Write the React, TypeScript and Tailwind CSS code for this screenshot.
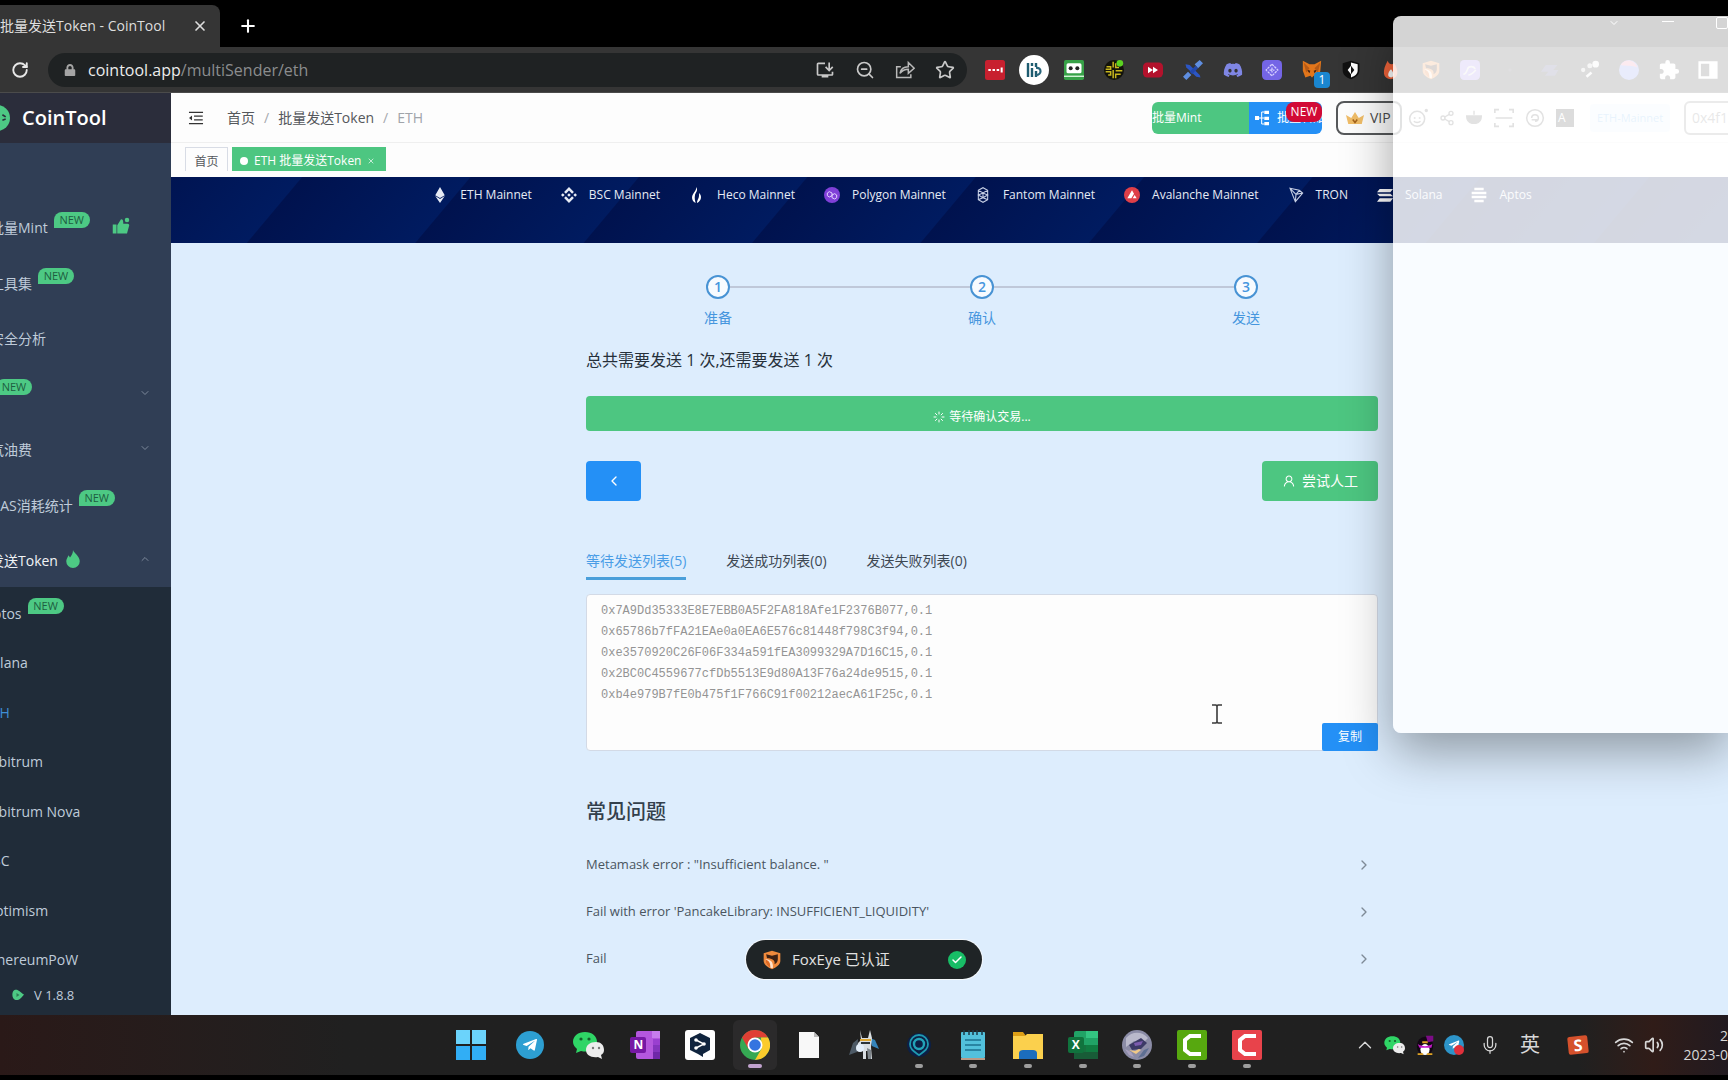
import type { ReactNode } from "react";
import {
  Check,
  ChevronDown,
  ChevronLeft,
  ChevronRight,
  ChevronUp,
  Loader,
  Mic,
  Plus,
  RotateCw,
  Share2,
  Star,
  Volume2,
  Wifi,
  X,
  ZoomOut,
} from "lucide-react";
import { AiOutlineMenuFold, AiOutlineUser } from "react-icons/ai";
import { FaDiscord, FaEthereum, FaLock, FaTelegramPlane } from "react-icons/fa";
import { MdExtension, MdInstallDesktop } from "react-icons/md";
import { SiBinance } from "react-icons/si";

const ADDRESSES = [
  "0x7A9Dd35333E8E7EBB0A5F2FA818Afe1F2376B077,0.1",
  "0x65786b7fFA21EAe0a0EA6E576c81448f798C3f94,0.1",
  "0xe3570920C26F06F334a591fEA3099329A7D16C15,0.1",
  "0x2BC0C4559677cfDb5513E9d80A13F76a24de9515,0.1",
  "0xb4e979B7fE0b475f1F766C91f00212aecA61F25c,0.1",
];

const FAQ = [
  'Metamask error : "Insufficient balance. "',
  "Fail with error 'PancakeLibrary: INSUFFICIENT_LIQUIDITY'",
  "Fail",
];

type MenuItem = {
  id: string;
  label: string;
  isNew?: boolean;
  icon?: ReactNode;
  arrow?: "up" | "down";
};

function Svg({
  box = "0 0 24 24",
  className = "size-5",
  children,
}: {
  box?: string;
  className?: string;
  children: ReactNode;
}) {
  return (
    <svg viewBox={box} className={className} fill="none" aria-hidden="true">
      {children}
    </svg>
  );
}

const thumb = (
  <Svg className="size-[18px]">
    <path d="M1 10h5v12H1zM7 22V11l5-8c3 0 3 2 3 6h6c1 0 2 1 2 2l-3 11z" fill="#4dc984" />
    <circle cx="20" cy="4" r="3" fill="#4dc984" />
  </Svg>
);

const flame = (
  <Svg className="size-[18px]">
    <path d="M12 0c1 4 9 8 9 15a9 9 0 0 1-18 0c0-3 2-5 3-8l2 3c2-3 4-5 4-10z" fill="#4dc984" />
  </Svg>
);

const MENU: MenuItem[] = [
  { id: "blank", label: "" },
  { id: "mint", label: "批量Mint", isNew: true, icon: thumb },
  { id: "tools", label: "工具集", isNew: true },
  { id: "security", label: "安全分析" },
  { id: "group", label: "", isNew: true, arrow: "down" },
  { id: "gas", label: "气油费", arrow: "down" },
  { id: "stats", label: "GAS消耗统计", isNew: true },
  { id: "send", label: "发送Token", icon: flame, arrow: "up" },
];

const SUBMENU = [
  "Aptos",
  "Solana",
  "ETH",
  "Arbitrum",
  "Arbitrum Nova",
  "BSC",
  "Optimism",
  "EthereumPoW",
];

const NETWORKS: { name: string; icon: ReactNode }[] = [
  { name: "ETH Mainnet", icon: <FaEthereum className="size-4" /> },
  { name: "BSC Mainnet", icon: <SiBinance className="size-4" /> },
  {
    name: "Heco Mainnet",
    icon: (
      <Svg className="size-4">
        <path d="M11 0c3 6-1 8-2 12-1 5 0 8 1 12-5-2-7-8-4-13 2-4 5-6 5-11z" fill="#fff" />
        <path d="M15 9c4 3 5 11-3 15 0-5 4-7 3-15z" fill="#fff" />
      </Svg>
    ),
  },
  {
    name: "Polygon Mainnet",
    icon: (
      <Svg className="size-4">
        <circle cx="12" cy="12" r="12" fill="#8040d8" />
        <path d="M5 9l3-2 4 2v4l-4 2-3-2zM12 12l4-2 3 2v4l-3 2-4-2z" stroke="#e3d3ff" strokeWidth="1.5" />
      </Svg>
    ),
  },
  {
    name: "Fantom Mainnet",
    icon: (
      <Svg className="size-4">
        <path
          d="M5 5l7-4 7 4v14l-7 4-7-4zM5 5l7 4 7-4M5 12l7-3 7 3-7 4zM5 19l7-3 7 3M12 9v7"
          stroke="#c6cfe4"
          strokeWidth="1.6"
        />
      </Svg>
    ),
  },
  {
    name: "Avalanche Mainnet",
    icon: (
      <Svg className="size-4">
        <circle cx="12" cy="12" r="12" fill="#df3f48" />
        <path d="M12 5l3 5-4 7H5zM16 12l3 5h-6z" fill="#fff" />
      </Svg>
    ),
  },
  {
    name: "TRON",
    icon: (
      <Svg className="size-4">
        <path d="M3 2l14 3 5 4-11 13zM3 2l9 9 10-2M12 11l-1 11M12 11l5-6" stroke="#c6cfe4" strokeWidth="1.6" />
      </Svg>
    ),
  },
  {
    name: "Solana",
    icon: (
      <Svg className="size-4">
        <path d="M4 3h20l-4 5H0zM0 10h20l4 4H4zM4 17h20l-4 5H0z" fill="#fff" />
      </Svg>
    ),
  },
  {
    name: "Aptos",
    icon: (
      <Svg className="size-4">
        <path d="M5 3h14M1 9h22M1 15h22M5 21h14" stroke="#fff" strokeWidth="4" />
      </Svg>
    ),
  },
];

const foxShield = (
  <>
    <path d="M12 1l10 3v9c0 5-5 8-10 10C7 21 2 18 2 13V4z" fill="#f08a3c" />
    <path d="M5 5l7 2 7-2v6c0 3-2 5-4 6 1-4-2-7-9-7z" fill="#3d2114" />
    <path d="M4 11c6 0 10 3 9 11-5-1-9-5-9-11z" fill="#ffe2cb" />
    <path d="M4 11c5 2 6 5 6 10-4-2-6-5-6-10z" fill="#e06a22" />
  </>
);

const EXTENSIONS: { name: string; icon: ReactNode }[] = [
  {
    name: "Password manager",
    icon: (
      <Svg>
        <rect width="24" height="24" rx="3" fill="#c8202f" />
        <path d="M4 12h3M9 12h3M14 12h3M20 9v6" stroke="#fff" strokeWidth="2.4" />
      </Svg>
    ),
  },
  {
    name: "Notes",
    icon: (
      <Svg className="size-[30px]" box="0 0 30 30">
        <circle cx="15" cy="15" r="15" fill="#fff" />
        <path d="M9 8v14M13 8v3M13 13v9M17 8v4M17 16v6" stroke="#1e5c70" strokeWidth="2.4" />
        <path d="M17 13c6-1 6 7 0 7" stroke="#27647a" strokeWidth="2.2" />
      </Svg>
    ),
  },
  {
    name: "Form filler",
    icon: (
      <Svg>
        <rect width="24" height="24" rx="2" fill="#37a147" />
        <rect x="3" y="4" width="18" height="12" rx="2" fill="#fff" />
        <circle cx="8" cy="10" r="2.4" fill="#222" />
        <circle cx="16" cy="10" r="2.4" fill="#222" />
        <path d="M0 19.500h24" stroke="#e6ffe8" strokeWidth="1.500" />
      </Svg>
    ),
  },
  {
    name: "Honey",
    icon: (
      <Svg>
        <circle cx="12" cy="12" r="12" fill="#12120a" />
        <path
          d="M3 8h5v3H2M2 14h6v4H5M11 2v7M11 12v10M14 4v5h4M14 22v-5h6M14 13h8"
          stroke="#c8b61e"
          strokeWidth="1.800"
        />
        <circle cx="19" cy="4" r="4" fill="#5bd321" />
      </Svg>
    ),
  },
  {
    name: "Video speed",
    icon: (
      <Svg>
        <rect y="3" width="24" height="18" rx="5" fill="#b3122c" />
        <path d="M6 8l6 4-6 4zM12 8l6 4-6 4z" fill="#fff" />
      </Svg>
    ),
  },
  {
    name: "Satellite",
    icon: (
      <Svg>
        <path d="M14 5l6-5 4 4-6 6zM0 20l6-6 4 4-6 6z" fill="#5f8ee0" />
        <path d="M3 5l5 1 12 12 1 3-5-1L4 9z" fill="#2c56c4" />
        <path d="M8 14l7-7 3 3-7 7z" fill="#2348ac" />
      </Svg>
    ),
  },
  { name: "Discord", icon: <FaDiscord className="size-5 text-[#7f86e4]" /> },
  {
    name: "Rabby",
    icon: (
      <Svg>
        <rect width="24" height="24" rx="5" fill="#7465e6" />
        <path d="M12 5l7 7-7 7-7-7zM12 9v6M9 12h6" stroke="#d6d0ff" strokeWidth="1.500" strokeDasharray="3 1" />
      </Svg>
    ),
  },
  {
    name: "MetaMask",
    icon: (
      <span className="relative">
        <Svg>
          <path d="M1 1l8 4h6l8-4-1 12-2 8-6-2-2 2-2-2-6 2-3-8z" fill="#e2761b" />
          <path d="M5 11l5 2-1 3zM19 11l-5 2 1 3z" fill="#4a2410" />
          <path d="M2 3l7 7-4 5zM22 3l-7 7 4 5z" fill="#b65a16" />
        </Svg>
        <span className="absolute -right-2 -bottom-2 flex h-4 w-4 items-center justify-center rounded-sm bg-[#1a86d0] text-xs text-white">
          1
        </span>
      </span>
    ),
  },
  {
    name: "Shield",
    icon: (
      <Svg>
        <path d="M12 1l10 3v8c0 6-4 9-10 11C6 21 2 18 2 12V4z" fill="#111" />
        <path d="M12 3l8 2v7c0 5-3 7-8 9z" fill="#fff" />
        <path d="M12 7l-4 5 4 5" fill="#fff" />
        <path d="M12 7l4 5-4 5" fill="#111" />
      </Svg>
    ),
  },
  {
    name: "Flame",
    icon: (
      <Svg>
        <path d="M8 1c2 5 5 5 8 3 5 8 6 18-4 19C2 23 1 13 8 1z" fill="#f2643a" />
        <path d="M12 11c4 5 4 9 0 10-5-1-4-6 0-10z" fill="#fff" />
      </Svg>
    ),
  },
  { name: "FoxEye", icon: <Svg>{foxShield}</Svg> },
  {
    name: "Wallet",
    icon: (
      <Svg>
        <rect width="24" height="24" rx="5" fill="#9a82ea" />
        <path d="M4 17c3 0 4-3 5-6 1-4 8-4 9 0M10 18c4 0 6-3 9-6" stroke="#ddd" strokeWidth="2" />
      </Svg>
    ),
  },
  { name: "Blank", icon: <Svg><circle cx="12" cy="12" r="2" fill="#48424e" /></Svg> },
  {
    name: "Swap",
    icon: (
      <Svg>
        <path d="M1 14l6-8h14l-5 6h6l-4 7H6l4-5z" fill="#4a4b78" />
      </Svg>
    ),
  },
  {
    name: "Nodes",
    icon: (
      <Svg>
        <circle cx="5" cy="12" r="2.600" fill="#ccc" />
        <circle cx="13" cy="7" r="3" fill="#ccc" />
        <circle cx="20" cy="5" r="4" fill="#eee" />
        <path d="M9 20l6-5" stroke="#eee" strokeWidth="3" />
      </Svg>
    ),
  },
  {
    name: "Orb",
    icon: (
      <Svg className="size-5">
        <circle cx="12" cy="12" r="12" fill="#7f90ee" />
        <path d="M2 6c5-8 17-7 20 3-6-3-12-1-20-3z" fill="#ef8aa9" />
      </Svg>
    ),
  },
  { name: "Extensions", icon: <MdExtension className="size-[22px] text-white" /> },
  {
    name: "Side panel",
    icon: (
      <Svg>
        <path d="M2 3h20v18H2zM15 3v18" stroke="#fff" strokeWidth="3" />
        <path d="M15 3h7v18h-7z" fill="#fff" />
      </Svg>
    ),
  },
];

const weChat = (
  <>
    <path d="M12 2C5 2 0 6 0 12c0 3 2 5 4 7l-1 4 5-2c9 2 16-2 16-9 0-6-5-10-12-10z" fill="#2fd566" />
    <circle cx="8" cy="9" r="1.600" fill="#14602c" />
    <circle cx="16" cy="9" r="1.600" fill="#14602c" />
    <path d="M23 12c-6 0-10 3-10 8s5 8 12 7l4 2-1-4c2-1 3-3 3-5 0-5-3-8-8-8z" fill="#ececec" />
    <circle cx="20" cy="18" r="1.200" fill="#777" />
    <circle cx="26" cy="18" r="1.200" fill="#777" />
  </>
);

const PINNED: { name: string; icon: ReactNode }[] = [
  {
    name: "Start",
    icon: (
      <Svg box="0 0 30 30" className="size-[30px]">
        <path d="M0 0h14v14H0zM16 0h14v14H16z" fill="#6bd3fb" />
        <path d="M0 16h14v14H0zM16 16h14v14H16z" fill="#31aef5" />
      </Svg>
    ),
  },
  {
    name: "Telegram",
    icon: (
      <span className="flex size-7 items-center justify-center rounded-full bg-[#2d9fd2]">
        <FaTelegramPlane className="size-4 text-white" />
      </span>
    ),
  },
  { name: "WeChat", icon: <Svg box="0 0 32 30" className="h-[30px] w-8">{weChat}</Svg> },
];

const RUNNING: { name: string; icon: ReactNode; mark?: "active" | "open" }[] = [
  {
    name: "OneNote",
    icon: (
      <span className="relative flex h-7 w-[30px] justify-end">
        <Svg box="0 0 24 28" className="h-7 w-6">
          <rect width="24" height="28" rx="2" fill="#b457dd" />
          <path d="M16 0h8v7h-8z" fill="#c77cec" />
          <path d="M17 8h7v6h-7z" fill="#9a3fd0" />
          <path d="M17 14h7v7h-7z" fill="#8434bd" />
          <path d="M17 21h7v7h-7z" fill="#6f27a8" />
        </Svg>
        <span className="absolute top-[6px] left-0 flex size-4 items-center justify-center rounded-xs bg-[#7618a4] text-xs font-bold text-white">
          N
        </span>
      </span>
    ),
  },
  {
    name: "Code flow",
    icon: (
      <Svg box="0 0 30 30" className="size-[30px]">
        <rect width="30" height="30" rx="3" fill="#fff" />
        <path d="M15 3l10 5v12l-7 4v3l-5-3-8-4V8z" fill="#10243e" />
        <path d="M11 10l8 4-8 4" stroke="#fff" strokeWidth="1.400" />
        <circle cx="11" cy="10" r="1.800" fill="#fff" />
        <circle cx="19" cy="14" r="1.800" fill="#fff" />
        <circle cx="11" cy="18" r="1.800" fill="#fff" />
      </Svg>
    ),
  },
  {
    name: "Chrome",
    mark: "active",
    icon: (
      <Svg box="0 0 30 30" className="size-[30px]">
        <circle cx="15" cy="15" r="15" fill="#35a853" />
        <path d="M2 7.500A15 15 0 0 1 28 7.500H15L8.500 19z" fill="#df3f34" />
        <path d="M28 7.500A15 15 0 0 1 15 30l6.500-11.300L21 7.500z" fill="#fbcb2c" />
        <circle cx="15" cy="15" r="7.500" fill="#fff" />
        <circle cx="15" cy="15" r="5.800" fill="#3574e0" />
      </Svg>
    ),
  },
  {
    name: "Document",
    icon: (
      <Svg box="0 0 20 28" className="h-7 w-5">
        <path d="M0 1h15l5 5v21H0z" fill="#f8f8f8" />
        <path d="M15 1v5h5z" fill="#bbb" />
      </Svg>
    ),
  },
  {
    name: "Donkey",
    icon: (
      <Svg box="0 0 30 30" className="size-[30px]">
        <path d="M9 9L4 13 0 25l8-3z" fill="#4d5a66" />
        <path d="M21 8l5 2 4 9-7-3z" fill="#3584ba" />
        <path d="M11 0l2 8h6l2-8 2 8-1 9 1 12h-4v-8h-2v8h-3v-9l-6-1 1-6 3-3z" fill="#d9dee2" />
        <path d="M18 18l4 2v9h-3z" fill="#7f868c" />
        <path d="M11 9h11v2H11z" fill="#dca532" />
        <path d="M12 12h9v2h-9z" fill="#2c3338" />
        <circle cx="11" cy="18" r="4" fill="#e4effa" />
      </Svg>
    ),
  },
  {
    name: "Beacon",
    mark: "open",
    icon: (
      <Svg box="0 0 30 30" className="size-[30px]">
        <circle cx="15" cy="15" r="12" fill="#0c1f45" />
        <path d="M15 25c-4-3-9-5-9-11a9 9 0 0 1 18 0c0 6-5 8-9 11z" stroke="#1f9ab0" strokeWidth="1.800" />
        <circle cx="15" cy="14" r="5" stroke="#22a3b8" strokeWidth="2.400" />
      </Svg>
    ),
  },
  {
    name: "Notepad",
    mark: "open",
    icon: (
      <Svg box="0 0 24 30" className="h-[30px] w-6">
        <rect y="2" width="24" height="26" rx="1" fill="#52c1dc" />
        <path d="M0 28h24v2H0z" fill="#b99a86" />
        <path d="M3 0v5M8 0v5M12 0v5M16 0v5M21 0v5" stroke="#1b3a48" strokeWidth="1.500" />
        <path d="M4 10h16M4 15h16M4 20h16" stroke="#1d7190" strokeWidth="1.600" />
      </Svg>
    ),
  },
  {
    name: "Explorer",
    mark: "open",
    icon: (
      <Svg box="0 0 30 28" className="h-7 w-[30px]">
        <path d="M0 1h10l3 4H0z" fill="#dd9f16" />
        <path d="M0 5h12l2-2h16v25H0z" fill="#fbd04d" />
        <path d="M6 28v-6c0-2 2-3 4-3h10c2 0 4 1 4 3v6z" fill="#1c6dbd" />
      </Svg>
    ),
  },
  {
    name: "Excel",
    mark: "open",
    icon: (
      <span className="relative flex h-7 w-[30px] justify-end">
        <Svg box="0 0 24 28" className="h-7 w-6">
          <rect width="24" height="28" rx="2" fill="#21a366" />
          <path d="M12 0h12v7H12z" fill="#33c481" />
          <path d="M0 14h12v7H0z" fill="#16713f" />
          <path d="M12 14h12v7H12z" fill="#107c41" />
          <path d="M0 21h24v7H0z" fill="#185c37" />
        </Svg>
        <span className="absolute top-[6px] left-0 flex size-4 items-center justify-center rounded-xs bg-[#10733d] text-xs font-bold text-white">
          X
        </span>
      </span>
    ),
  },
  {
    name: "Avatar",
    mark: "open",
    icon: (
      <Svg box="0 0 30 30" className="size-[30px]">
        <circle cx="15" cy="15" r="15" fill="#8b8ca6" />
        <path d="M4 8c6-7 16-7 22 0l-5 5-9-2-8 6z" fill="#b9b9cb" />
        <path d="M7 15l12-7 6 5-6 6-9 1z" fill="#3c3a66" />
        <path d="M7 20l6 1 4-2 2 1-5 4z" fill="#f0c987" />
        <path d="M12 13l9-2-2 4-6 1z" fill="#7c5cae" />
        <path d="M22 20l5-2-5 8-6 2z" fill="#5e6f93" />
        <path d="M3 19l4 6 5 2-3-5z" fill="#a9a0bf" />
      </Svg>
    ),
  },
  { name: "Camtasia", mark: "open", icon: <Camtasia fill="#57a80f" /> },
  { name: "Recorder", mark: "open", icon: <Camtasia fill="#e8434b" /> },
];

function Camtasia({ fill }: { fill: string }) {
  return (
    <Svg box="0 0 30 30" className="size-[30px]">
      <rect width="30" height="30" rx="2" fill={fill} />
      <path d="M24 6H13L8 10v10l5 4h11" stroke="#fff" strokeWidth="4" />
    </Svg>
  );
}

function NewBadge() {
  return (
    <span className="mb-3 ml-1.5 flex h-4 w-9 shrink-0 items-center justify-center rounded-full rounded-bl-none bg-[#4dc984] text-[11px] text-[#1e5e41]">
      NEW
    </span>
  );
}

function BrowserChrome() {
  return (
    <header className="shrink-0 bg-black">
      <div className="flex h-[47px] items-end">
        <div className="flex h-[42px] w-[220px] items-center justify-between rounded-tr-lg bg-[#353535] pr-3 text-sm text-[#dedede]">
          <span className="whitespace-nowrap">批量发送Token - CoinTool</span>
          <button type="button" aria-label="Close tab">
            <X className="size-4" strokeWidth={2.5} />
          </button>
        </div>
        <button type="button" aria-label="New tab" className="flex h-[42px] w-14 items-center justify-center text-white">
          <Plus className="size-5" strokeWidth={2.5} />
        </button>
        <div className="ml-auto flex h-[42px] w-[120px] items-start justify-between pt-3 text-white">
          <ChevronDown className="size-3" />
          <span className="mt-1 h-px w-3 bg-white" />
          <span className="size-3 rounded-xs border border-white" />
        </div>
      </div>
      <div className="flex h-[46px] items-center border-b border-[#4b4b4b] bg-[#353535]">
        <button type="button" aria-label="Reload" className="flex w-12 justify-center pr-2 text-[#e8e8e8]">
          <RotateCw className="size-[18px]" strokeWidth={2.5} />
        </button>
        <div className="flex h-[34px] min-w-0 flex-1 items-center rounded-full bg-[#1f2223] pr-3 pl-4 text-[#c9c9c9]">
          <FaLock className="size-3 text-[#a5a5a5]" />
          <a href="#eth" className="ml-3 text-base text-[#8b8d8e]">
            <span className="text-[#ececec]">cointool.app</span>/multiSender/eth
          </a>
          <div className="ml-auto flex items-center gap-5">
            <MdInstallDesktop className="size-5" />
            <ZoomOut className="size-5" />
            <Svg>
              <path
                d="M7 8H2v13h17v-4M6 16c1-6 5-8 10-8V3l7 7-7 6v-5c-4 0-7 1-10 5z"
                stroke="#b9b9b9"
                strokeWidth="1.800"
              />
            </Svg>
            <Star className="size-5" />
          </div>
        </div>
        <ul className="ml-2 grid w-[753px] shrink-0 grid-cols-19">
          {EXTENSIONS.map((ext) => (
            <li key={ext.name} className="flex h-8 items-center justify-center">
              <button type="button" aria-label={ext.name}>
                {ext.icon}
              </button>
            </li>
          ))}
        </ul>
      </div>
    </header>
  );
}

function Sidebar() {
  return (
    <aside className="flex w-[171px] shrink-0 flex-col overflow-hidden bg-[#303e55] text-sm text-[#bfcbd9]">
      <div className="flex h-[50px] shrink-0 items-center bg-[#2b2d3b]">
        <Svg className="-ml-4 size-[26px]">
          <circle cx="12" cy="12" r="12" fill="#4dc984" />
          <path d="M17 9l3 2M17 14l3-1" stroke="#2b2d3b" strokeWidth="1.500" />
        </Svg>
        <strong className="ml-3 text-xl leading-6 font-semibold text-white">CoinTool</strong>
      </div>
      <nav className="flex h-[444px] shrink-0 flex-col">
        {MENU.map((item) => (
          <div key={item.id} className="-ml-2.5 flex flex-1 items-center pr-5 whitespace-nowrap">
            <a href={`#${item.id}`} className={item.id === "send" ? "pt-1 text-[#f0f3f6]" : "pt-1"}>
              {item.label}
            </a>
            {item.isNew && <NewBadge />}
            {item.icon && <span className={item.isNew ? "ml-[22px]" : "ml-1.5"}>{item.icon}</span>}
            {item.arrow === "down" && <ChevronDown className="ml-auto size-3 text-[#7d899b]" />}
            {item.arrow === "up" && <ChevronUp className="ml-auto size-3 text-[#7d899b]" />}
          </div>
        ))}
      </nav>
      <div className="flex flex-1 flex-col bg-[#202c39]">
        <nav className="flex h-[396px] flex-col">
          {SUBMENU.map((name) => (
            <div key={name} className="-ml-4 flex flex-1 items-center whitespace-nowrap">
              <a href={`#${name}`} className={name === "ETH" ? "pt-1 text-[#3f8fd6]" : "pt-1"}>
                {name}
              </a>
              {name === "Aptos" && <NewBadge />}
            </div>
          ))}
        </nav>
        <div className="flex items-center gap-2.5 pl-3 text-[13px] leading-6">
          <Svg className="size-3">
            <path d="M5 2c8-2 10 4 19 9-6 7-9 12-17 11C-1 20-1 5 5 2z" fill="#4dc984" />
            <path d="M9 8l6 4-6 4z" fill="#2f7d55" />
          </Svg>
          <span>V 1.8.8</span>
        </div>
      </div>
    </aside>
  );
}

function TopBar() {
  return (
    <div className="flex h-[50px] items-center border-b border-[#efefef] bg-[#fdfdfd] text-sm text-[#55585c]">
      <button type="button" aria-label="Fold menu" className="mr-[22px] ml-4 text-[#333]">
        <AiOutlineMenuFold className="size-[18px]" />
      </button>
      <nav className="flex items-center gap-[9px] whitespace-nowrap" aria-label="Breadcrumb">
        <a href="#home">首页</a>
        <span className="text-[#a5a8ad]">/</span>
        <a href="#send">批量发送Token</a>
        <span className="text-[#a5a8ad]">/</span>
        <span className="text-[#a0a4aa]">ETH</span>
      </nav>
      <div className="relative ml-auto flex h-8 shrink-0 overflow-hidden rounded-md text-xs text-white">
        <button type="button" className="w-[97px] bg-[#4dc681] text-left">
          批量Mint
        </button>
        <button type="button" className="flex w-[73px] items-center gap-1.5 bg-[#2490f6] pl-1.5 whitespace-nowrap">
          <Svg className="size-4 shrink-0">
            <path d="M0 12h10M14 3h-4v18h4M10 12h4" stroke="#fff" strokeWidth="1.5" />
            <path d="M14 1h7v5h-7zM14 10h7v5h-7zM14 18h7v5h-7zM0 9h6v6H0z" fill="#fff" />
          </Svg>
          批量转账
        </button>
        <span className="absolute top-0 right-0 flex h-5 w-9 items-center justify-center rounded-lg bg-[#d20a35]">
          NEW
        </span>
      </div>
      <button
        type="button"
        className="ml-3.5 flex h-[34px] w-[66px] shrink-0 items-center gap-1.5 rounded-lg border-2 border-[#56585a] pl-2 text-[#4b4b4b]"
      >
        <Svg className="size-[18px]">
          <path d="M3 20L0 8l7 4 5-8 5 8 7-4-3 12z" fill="#f0bd68" />
          <path d="M9 14l3 4 3-4" stroke="#a3621b" strokeWidth="2" />
        </Svg>
        VIP
      </button>
      <div className="mr-4 ml-1.5 flex w-[166px] shrink-0 items-center justify-between text-[#555]">
        <Svg>
          <circle cx="11" cy="13" r="9" stroke="currentColor" strokeWidth="1.800" />
          <path d="M7 12h2M13 12h2M7 16c2 2 6 2 8 0" stroke="currentColor" strokeWidth="1.800" />
          <circle cx="22" cy="3" r="2" fill="currentColor" />
        </Svg>
        <Share2 className="size-4" />
        <Svg className="size-4">
          <path d="M1 9h22c0 6-3 10-8 11H9c-5-1-8-5-8-11zM12 1v6" fill="currentColor" stroke="currentColor" strokeWidth="2" />
        </Svg>
        <Svg>
          <path d="M1 6V2h5M18 2h5v4M23 18v4h-5M6 22H1v-4M2 12h20" stroke="currentColor" strokeWidth="2" />
        </Svg>
        <Svg>
          <circle cx="12" cy="12" r="10" stroke="currentColor" strokeWidth="1.800" />
          <path d="M8 12a4 4 0 1 1 4 4M8 14h8" stroke="currentColor" strokeWidth="1.800" />
        </Svg>
        <span className="flex size-[18px] items-center bg-[#333] pl-0.5 text-xs text-white">A</span>
      </div>
      <button type="button" className="h-7 w-20 shrink-0 rounded bg-[#e6f5ff] text-[11px] text-[#78b8f2]">
        ETH-Mainnet
      </button>
      <button
        type="button"
        className="ml-3.5 h-[34px] w-[109px] shrink-0 rounded-md border-2 border-[#888] pl-1.5 text-left text-[#777]"
      >
        0x4f1
      </button>
    </div>
  );
}

function TagsBar() {
  return (
    <div className="flex h-[34px] items-start gap-1 bg-[#fdfdfd] pt-1 pl-3.5 text-xs text-[#55585c]">
      <a href="#home" className="flex h-6 w-[43px] items-center justify-center border border-b-0 border-[#d8dce5] pt-1">
        首页
      </a>
      <a href="#eth" className="flex h-6 w-[154px] items-center bg-[#4dc681] pt-1 pl-2 whitespace-nowrap text-white">
        <span className="mr-1.5 size-2 rounded-full bg-white" />
        ETH 批量发送Token
        <X className="ml-1.5 size-2" />
      </a>
    </div>
  );
}

function Steps() {
  const labels = ["准备", "确认", "发送"];
  return (
    <ol className="grid grid-cols-3 pt-8 text-sm text-[#4596de]">
      {labels.map((label, i) => (
        <li key={label} className="flex flex-col items-center">
          <div className="flex w-full items-center">
            <span className={i === 0 ? "h-0.5 flex-1" : "h-0.5 flex-1 bg-[#bfc8d9]"} />
            <span className="flex size-6 items-center justify-center rounded-full border-2 border-[#4893d4] bg-[#f7fbff] text-sm leading-none font-semibold">
              {i + 1}
            </span>
            <span className={i === 2 ? "h-0.5 flex-1" : "h-0.5 flex-1 bg-[#bfc8d9]"} />
          </div>
          <span className="mt-2 leading-[22px]">{label}</span>
        </li>
      ))}
    </ol>
  );
}

function Sender() {
  return (
    <div className="mx-auto w-[792px]">
      <Steps />
      <p className="mt-5 text-base leading-[22px] text-[#26303a]">总共需要发送 1 次,还需要发送 1 次</p>
      <div className="mt-[25px] flex h-[35px] items-center justify-center gap-1 rounded-sm bg-[#4dc681] pt-1.5 text-xs text-white">
        <Loader className="size-3" />
        等待确认交易...
      </div>
      <div className="mt-[30px] flex h-10 justify-between text-white">
        <button
          type="button"
          aria-label="Back"
          className="flex w-[55px] items-center justify-center rounded-sm bg-[#2490f6]"
        >
          <ChevronLeft className="size-4" />
        </button>
        <button
          type="button"
          className="flex w-[116px] items-center justify-center gap-1.5 rounded-sm bg-[#4dc681] text-sm"
        >
          <AiOutlineUser className="size-3.5" />
          尝试人工
        </button>
      </div>
      <div className="mt-12 flex gap-10 text-sm leading-6 text-[#3d4853]" role="tablist">
        <button type="button" role="tab" aria-selected="true" className="border-b-3 border-[#4a9fda] pb-1 text-[#4a9de6]">
          等待发送列表(5)
        </button>
        <button type="button" role="tab" aria-selected="false" className="border-b-3 border-transparent pb-1">
          发送成功列表(0)
        </button>
        <button type="button" role="tab" aria-selected="false" className="border-b-3 border-transparent pb-1">
          发送失败列表(0)
        </button>
      </div>
      <div className="relative mt-3.5">
        <textarea
          aria-label="等待发送列表"
          readOnly
          defaultValue={ADDRESSES.join("\n")}
          className="block h-[157px] w-full resize-none rounded-sm border border-[#d3dae6] bg-[#fdfdfd] px-3.5 py-1.5 font-['Liberation_Mono',monospace] text-xs leading-[21px] text-[#949494] outline-none"
        />
        <button
          type="button"
          className="absolute right-0 bottom-0 flex h-7 w-14 items-center justify-center rounded-xs bg-[#2490f6] text-xs text-white"
        >
          复制
        </button>
        <Svg box="0 0 12 20" className="absolute right-[155px] bottom-[27px] h-5 w-3">
          <path d="M1 1h4l1 1 1-1h4M6 2v16M1 19h4l1-1 1 1h4" stroke="#3a3a3a" strokeWidth="1.600" />
        </Svg>
      </div>
      <h2 className="mt-[46px] mb-3.5 text-xl leading-[30px] font-medium text-[#33404c]">常见问题</h2>
      {FAQ.map((question) => (
        <button
          key={question}
          type="button"
          className="flex h-[47px] w-full items-center justify-between pt-px pr-1.5 text-left text-[13px] text-[#4a5560]"
        >
          {question}
          <ChevronRight className="size-4 text-[#7e8a96]" />
        </button>
      ))}
    </div>
  );
}

function Taskbar() {
  return (
    <footer className="mb-[5px] flex h-[60px] shrink-0 items-stretch bg-linear-to-r from-[#2a1918] via-[#202020] via-20% to-[#202020] text-[#d8d8d8]">
      <ul className="ml-[441px] grid w-[177px] shrink-0 grid-cols-3">
        {PINNED.map((app) => (
          <li key={app.name} className="flex items-center justify-center">
            <button type="button" aria-label={app.name}>
              {app.icon}
            </button>
          </li>
        ))}
      </ul>
      <ul className="grid w-[656px] shrink-0 grid-cols-12">
        {RUNNING.map((app) => (
          <li key={app.name} className="relative flex items-center justify-center">
            <button
              type="button"
              aria-label={app.name}
              className={
                app.mark === "active"
                  ? "flex h-[50px] w-11 items-center justify-center rounded-md bg-[#2b2a2b]"
                  : "flex items-center justify-center"
              }
            >
              {app.icon}
            </button>
            {app.mark && (
              <span
                className={
                  app.mark === "active"
                    ? "absolute bottom-[7px] h-1 w-3.5 rounded-full bg-[#c2a3cf]"
                    : "absolute bottom-[7px] h-1 w-2 rounded-full bg-[#9d9d9d]"
                }
              />
            )}
          </li>
        ))}
      </ul>
      <div className="ml-auto flex w-[374px] shrink-0 items-center bg-linear-to-r from-[#202020] from-60% via-[#301c18] via-80% to-[#211a20]">
        <ChevronUp className="size-[22px]" strokeWidth={1.5} />
        <Svg box="0 0 32 30" className="ml-2 h-5 w-[22px]">{weChat}</Svg>
        <Svg className="ml-2 size-[22px]">
          <ellipse cx="12" cy="13" rx="9" ry="10" fill="#120714" />
          <path d="M13 2l8 0v6l-6 1z" fill="#7c0c86" />
          <ellipse cx="12" cy="17" rx="5" ry="6" fill="#fff" />
          <path d="M4 11c5 3 11 3 16 0l-1 4H6z" fill="#c31ac9" />
          <path d="M9 8h6v2H9zM4 21h6v2H4zM14 21h6v2h-6z" fill="#e0a323" />
        </Svg>
        <span className="relative ml-2 flex size-5 items-center justify-center rounded-full bg-[#2d94c9]">
          <FaTelegramPlane className="size-3 text-white" />
          <span className="absolute right-0 bottom-0 size-2.5 rounded-full bg-[#e0303b]" />
        </span>
        <Mic className="ml-4 size-5" strokeWidth={1.5} />
        <span className="ml-5 text-xl leading-6">英</span>
        <span className="ml-7 flex h-[18px] w-5 -rotate-6 items-center justify-center rounded-xs bg-[#d5512c] text-base leading-none font-bold text-white">
          S
        </span>
        <Wifi className="ml-[26px] size-5" />
        <Volume2 className="ml-2.5 size-5" />
        <time className="ml-auto text-right text-sm leading-[19px] whitespace-nowrap">
          2
          <br />
          2023-0
        </time>
      </div>
    </footer>
  );
}

export default function App() {
  return (
    <div className="relative flex h-screen flex-col overflow-hidden bg-black font-['Open_Sans','Noto_Sans_CJK_SC',sans-serif]">
      <BrowserChrome />
      <div className="flex min-h-0 flex-1">
        <Sidebar />
        {/* the page runs on past the right edge of the window */}
        <main className="-mr-[65px] min-w-0 flex-1 bg-[#ddedfd]">
          <TopBar />
          <TagsBar />
          <nav className="flex h-[66px] justify-center gap-[29px] bg-[repeating-linear-gradient(130deg,#00124e_-28px,#001b60_100px,#00124e_101px)] pt-2 text-xs leading-5 whitespace-nowrap text-[#e6ebf5]">
            {NETWORKS.map((net) => (
              <a key={net.name} href="#network" className="flex h-5 items-center gap-3">
                {net.icon}
                {net.name}
              </a>
            ))}
          </nav>
          <Sender />
        </main>
      </div>
      <Taskbar />

      <div className="absolute bottom-[101px] left-1/2 flex h-[39px] w-[236px] -translate-x-1/2 items-center rounded-full bg-[#1f2426] pr-4 pl-4 text-[15px] text-[#e2e2e2] ring-1 ring-[#f4f8fc]">
        <Svg className="mr-2.5 size-5">{foxShield}</Svg>
        FoxEye 已认证
        <span className="ml-auto flex size-[18px] items-center justify-center rounded-full bg-[#18bd66]">
          <Check className="size-3 text-white" strokeWidth={3} />
        </span>
      </div>

      {/* window fading in above everything else */}
      <div className="absolute top-4 right-0 h-[717px] w-[335px] rounded-l-lg bg-white/83 shadow-[0_18px_50px_rgba(0,0,0,0.36)]" />
    </div>
  );
}
